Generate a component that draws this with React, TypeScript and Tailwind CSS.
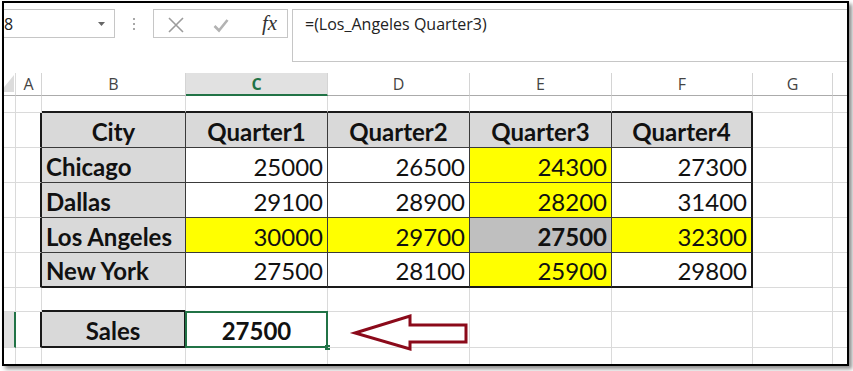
import clsx from "clsx";
import type { ReactNode } from "react";

// column widths: row header, A, B, C, D, E, F, G, H
const W = [
  "w-[12px] shrink-0",
  "w-[26px] shrink-0",
  "w-[144px] shrink-0",
  "w-[142px] shrink-0",
  "w-[142px] shrink-0",
  "w-[142px] shrink-0",
  "w-[141px] shrink-0",
  "w-[80px] shrink-0",
  "flex-1 min-w-0",
];

const GR = "border-r border-r-[#dadada]";
const GB = "border-b border-b-[#dadada]";
const TR = "border-r border-r-[#3a3a3a]";
const TB = "border-b border-b-[#3a3a3a]";
const KR = "border-r-2 border-r-[#1a1a1a]";
const KB = "border-b-2 border-b-[#1a1a1a]";

const table = [
  ["City", "Quarter1", "Quarter2", "Quarter3", "Quarter4"],
  ["Chicago", "25000", "26500", "24300", "27300"],
  ["Dallas", "29100", "28900", "28200", "31400"],
  ["Los Angeles", "30000", "29700", "27500", "32300"],
  ["New York", "27500", "28100", "25900", "29800"],
];

function Cell({ col, className, children }: { col: number; className?: string; children?: ReactNode }) {
  return <div className={clsx("h-full", W[col], className)}>{children}</div>;
}

function cellBg(r: number, c: number) {
  if (r === 0 || c === 0) return "bg-[#d9d9d9]";
  if (r === 3 && c === 3) return "bg-[#bfbfbf] font-bold";
  if (r === 3 && c !== 0) return "bg-[#ffff00]";
  if (c === 3) return "bg-[#ffff00]";
  return "bg-white";
}

function TableRow({ r }: { r: number }) {
  const row = table[r];
  const last = r === table.length - 1;
  return (
    <div className="flex h-[35px]">
      <Cell col={0} className={clsx(GR, GB)} />
      <Cell col={1} className={clsx(KR, GB)} />
      {row.map((v, i) => (
        <Cell
          key={i}
          col={i + 2}
          className={clsx(
            "flex items-center pt-[3px] font-['Lato',sans-serif] text-[24px] text-[#111]",
            i === 4 ? KR : TR,
            last ? KB : TB,
            cellBg(r, i),
            r === 0 ? "justify-center font-bold" : i === 0 ? "justify-start pl-[4px] font-bold" : "justify-end pr-[4px]"
          )}
        >
          {v}
        </Cell>
      ))}
      <Cell col={7} className={clsx(GR, GB)} />
      <Cell col={8} className={GB} />
    </div>
  );
}

function FormulaBar() {
  return (
    <div className="flex h-[59px] items-start pt-[6px] font-['Open_Sans',sans-serif] text-[16px] text-[#222]">
      <div className="flex h-[29px] w-[111px] shrink-0 items-center border-y border-r border-[#c6c6c6] bg-white">
        <span className="flex-1">8</span>
        <svg width="7" height="4" className="mr-[9px]">
          <path d="M0 0h7L3.5 4z" fill="#666" />
        </svg>
      </div>
      <div className="ml-[18px] flex h-[29px] w-[2px] flex-col items-center justify-center gap-[3px]">
        <span className="h-[2px] w-[2px] bg-[#a8a8a8]" />
        <span className="h-[2px] w-[2px] bg-[#a8a8a8]" />
        <span className="h-[2px] w-[2px] bg-[#a8a8a8]" />
      </div>
      <div className="ml-[18px] flex h-[29px] w-[135px] shrink-0 items-center border border-[#c6c6c6] pl-[14px]">
        <svg width="16" height="16" viewBox="0 0 16 16" className="mt-[2px]">
          <path d="M1 1L15 15M15 1L1 15" stroke="#9c9c9c" strokeWidth="1.6" fill="none" />
        </svg>
        <svg width="16" height="15" viewBox="0 0 16 15" className="ml-[29px] mt-[3px]">
          <path d="M1.5 8L6 12.5L14.5 2" stroke="#b3b3b3" strokeWidth="2.6" fill="none" />
        </svg>
        <span className="ml-[33px] font-['Liberation_Serif',serif] text-[21px] italic leading-none text-[#333]">fx</span>
      </div>
      <div className="ml-[4px] h-[53px] flex-1 border-y border-l border-[#c6c6c6] pl-[12px] pt-[4px] leading-[20px]">
        =(Los_Angeles Quarter3)
      </div>
    </div>
  );
}

function HeaderRow() {
  const letters = ["", "A", "B", "C", "D", "E", "F", "G", ""];
  return (
    <div className="flex h-[23px] font-['Open_Sans',sans-serif] text-[16px] text-[#444]">
      <Cell col={0} className={clsx(GR, "border-b border-b-[#ababab]")}>
        <svg width="11" height="22" className="block">
          <polygon points="10,2 10,19 -4,19" fill="#dcdcdc" />
        </svg>
      </Cell>
      {letters.slice(1).map((l, i) =>
        l === "C" ? (
          <Cell
            key={i}
            col={i + 1}
            className="flex items-center justify-center border-r border-r-[#d4d4d4] border-b-2 border-b-[#217346] bg-[#e1e1e1] font-bold text-[#217346]"
          >
            {l}
          </Cell>
        ) : (
          <Cell
            key={i}
            col={i + 1}
            className={clsx(
              "flex items-center justify-center border-b border-b-[#ababab]",
              i < 7 ? "border-r border-r-[#d4d4d4]" : ""
            )}
          >
            {l}
          </Cell>
        )
      )}
    </div>
  );
}

export default function App() {
  return (
    <div className="h-[371px] w-[853px] bg-white pl-[2px] pt-[1px]">
      <div className="flex h-[365px] w-[847px] flex-col overflow-hidden border-2 border-black bg-white shadow-[3px_3px_4px_rgba(0,0,0,0.45)]">
        <FormulaBar />
        <div className="h-[11px]" />
        <HeaderRow />

        {/* spacer row above the table */}
        <div className="flex h-[17px]">
          <Cell col={0} className={clsx(GR, GB)} />
          <Cell col={1} className={clsx(GR, GB)} />
          <Cell col={2} className={clsx(GR, KB)} />
          <Cell col={3} className={clsx(GR, KB)} />
          <Cell col={4} className={clsx(GR, KB)} />
          <Cell col={5} className={clsx(GR, KB)} />
          <Cell col={6} className={clsx(GR, KB)} />
          <Cell col={7} className={clsx(GR, GB)} />
          <Cell col={8} className={GB} />
        </div>

        {table.map((_, r) => (
          <TableRow key={r} r={r} />
        ))}

        <div className="flex h-[24px]">
          <Cell col={0} className={clsx(GR, GB)} />
          <Cell col={1} className={clsx(GR, GB)} />
          <Cell col={2} className={clsx(GR, KB)} />
          <Cell col={3} className={clsx(GR, GB)} />
          <Cell col={4} className={clsx(GR, GB)} />
          <Cell col={5} className={clsx(GR, GB)} />
          <Cell col={6} className={clsx(GR, GB)} />
          <Cell col={7} className={clsx(GR, GB)} />
          <Cell col={8} className={GB} />
        </div>

        {/* Sales row */}
        <div className="flex h-[36px] font-['Lato',sans-serif] text-[24px] font-bold text-[#111]">
          <Cell col={0} className={clsx("border-r-2 border-r-[#217346] bg-[#e1e1e1]", GB)} />
          <Cell col={1} className={clsx(KR, GB)} />
          <Cell col={2} className={clsx(KR, KB, "flex items-center justify-center bg-[#d9d9d9] pt-[3px]")}>
            Sales
          </Cell>
          <Cell col={3} className={clsx(GR, GB, "relative flex items-center justify-center pt-[3px]")}>
            27500
            <div className="absolute -bottom-[1px] -left-[1px] -right-[1px] -top-[1px] border-2 border-[#217346]" />
            <div className="absolute -bottom-[3px] -right-[3px] h-[5px] w-[5px] bg-[#217346]" />
          </Cell>
          <Cell col={4} className={clsx(GR, GB, "relative")}>
            <svg width="142" height="40" className="absolute left-0 top-0 overflow-visible">
              <path
                d="M27 21L82 4V13H138V30H82V37Z"
                fill="none"
                stroke="#8b0a1a"
                strokeWidth="3"
                strokeLinejoin="miter"
              />
            </svg>
          </Cell>
          <Cell col={5} className={clsx(GR, GB)} />
          <Cell col={6} className={clsx(GR, GB)} />
          <Cell col={7} className={clsx(GR, GB)} />
          <Cell col={8} className={GB} />
        </div>

        <div className="flex flex-1">
          <Cell col={0} className={GR} />
          <Cell col={1} className={GR} />
          <Cell col={2} className={GR} />
          <Cell col={3} className={GR} />
          <Cell col={4} className={GR} />
          <Cell col={5} className={GR} />
          <Cell col={6} className={GR} />
          <Cell col={7} className={GR} />
          <Cell col={8} />
        </div>
      </div>
    </div>
  );
}
